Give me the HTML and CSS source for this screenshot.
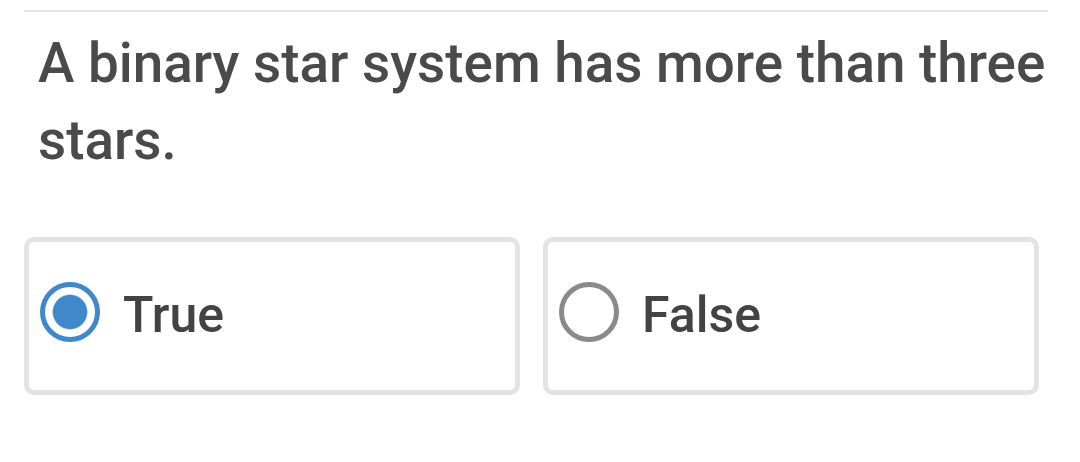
FILE: index.html
```html
<!DOCTYPE html>
<html lang="en">
<head>
    <meta charset="UTF-8">
    <meta name="viewport" content="width=device-width, initial-scale=1.0">
    <title>Quiz Question</title>
    <link rel="stylesheet" href="styles.css">
</head>
<body>

    <div class="question">
        <div class="divider"></div>
        <h2 class="question-text">A binary star system has more than three stars.</h2>

        <div class="options">
            <label class="option">
                <input type="radio" name="answer" value="true" checked>
                <span class="option-label">True</span>
            </label>
            <label class="option">
                <input type="radio" name="answer" value="false">
                <span class="option-label">False</span>
            </label>
        </div>
    </div>

</body>
</html>
```

FILE: styles.css
```css
body {
    font-family: Roboto, "Liberation Sans", sans-serif;
    margin: 0;
    padding: 0;
    background-color: white;
}

.question {
    padding: 10px 32px 0 24px;
}

.divider {
    height: 2px;
    background-color: #e6e6e6;
}

.question-text {
    margin: 13px 0 0 14px;
    font-size: 54.8px;
    line-height: 77px;
    font-weight: 500;
    color: #4a4a4a;
}

.options {
    display: grid;
    grid-template-columns: 496px 496px;
    gap: 23px;
    margin-top: 58px;
}

.option {
    display: flex;
    align-items: center;
    gap: 23px;
    height: 158px;
    box-sizing: border-box;
    padding: 0 11px 9px 11px;
    border: 5px solid #e3e3e3;
    border-radius: 10px;
    cursor: pointer;
}

.option input[type="radio"] {
    appearance: none;
    -webkit-appearance: none;
    margin: 0;
    width: 60px;
    height: 60px;
    flex-shrink: 0;
    box-sizing: border-box;
    border: 5px solid #8a8a8a;
    border-radius: 50%;
    background-color: white;
}

.option input[type="radio"]:checked {
    border-color: #3f88c9;
    background: radial-gradient(circle, #3f88c9 0, #3f88c9 16.5px, white 18px);
}

.option-label {
    font-size: 50px;
    font-weight: 500;
    color: #434343;
    padding-top: 6px;
}
```
